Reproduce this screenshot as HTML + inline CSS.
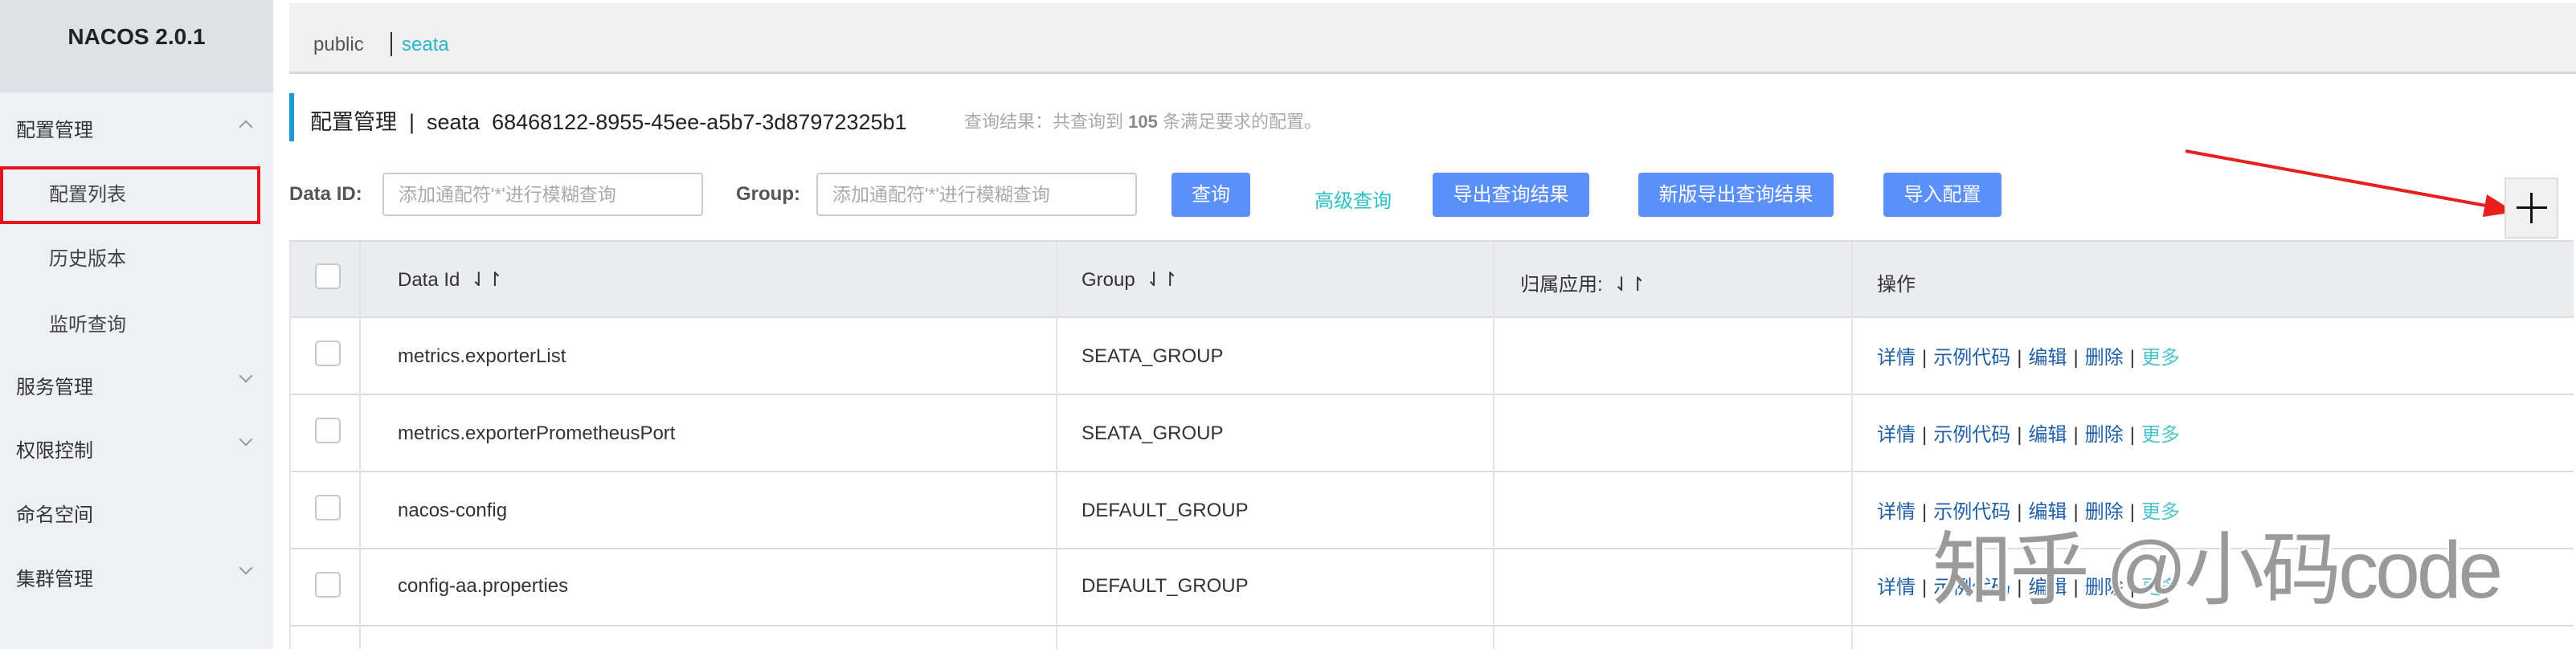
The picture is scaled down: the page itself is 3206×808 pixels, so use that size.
<!DOCTYPE html>
<html><head><meta charset="utf-8"><style>
*{margin:0;padding:0;box-sizing:border-box}
body{width:3206px;height:808px;overflow:hidden;background:#fff;font-family:"Liberation Sans","Noto Sans CJK SC",sans-serif;color:#333;position:relative;font-size:24px}
.a{position:absolute;white-space:nowrap}
.side{position:absolute;left:0;top:0;width:340px;height:808px;background:#eef0f3}
.logo{position:absolute;left:0;top:0;width:340px;height:115px;background:#dde1e8}
.mi{position:absolute;left:20px;font-size:24px;color:#333}
.si{position:absolute;left:61px;font-size:24px;color:#444}
.chev{position:absolute;left:300px;width:12px;height:12px;border-right:2px solid #999;border-bottom:2px solid #999}
.btn{position:absolute;top:215px;height:55px;background:#5b8ff9;color:#fff;border-radius:4px;font-size:24px;line-height:55px;text-align:center}
.inp{position:absolute;top:215px;height:54px;border:2px solid #ccc;border-radius:4px;color:#aaa;font-size:23px;line-height:50px;padding-left:18px}
.hl{position:absolute;left:360px;width:2843px;height:2px;background:#dcdcdc}
.vl{position:absolute;width:2px;background:#e4e4e4;top:301px;height:507px}
.cb{position:absolute;left:392px;width:32px;height:32px;border:2px solid #c8c8c8;border-radius:5px;background:#fff}
.ops{position:absolute;left:2336px;font-size:24px;color:#1f5fa8}
.ops span.s{color:#333;margin:0 8px}
.ops span.m{color:#4cc4cc}
</style></head><body>
<div class="side"><div class="logo"></div>
<div class="a" style="left:0;width:340px;text-align:center;top:30px;font-size:28px;font-weight:bold;color:#222">NACOS 2.0.1</div>
<div class="mi" style="top:142px">配置管理</div>
<div class="a" style="left:300px;width:12px;height:12px;border-left:2px solid #999;border-top:2px solid #999;transform:rotate(45deg);top:152px"></div>
<div style="position:absolute;left:0;top:196px;width:340px;height:612px;background:#eef0f3"></div>
<div style="position:absolute;left:0;top:207px;width:324px;height:72px;border:4px solid #e4161b"></div>
<div class="si" style="top:222px">配置列表</div>
<div class="si" style="top:302px">历史版本</div>
<div class="si" style="top:384px">监听查询</div>
<div class="mi" style="top:462px">服务管理</div><div class="chev" style="top:462px;transform:rotate(45deg)"></div>
<div class="mi" style="top:541px">权限控制</div><div class="chev" style="top:541px;transform:rotate(45deg)"></div>
<div class="mi" style="top:621px">命名空间</div>
<div class="mi" style="top:701px">集群管理</div><div class="chev" style="top:701px;transform:rotate(45deg)"></div>
</div>
<div style="position:absolute;left:360px;top:4px;width:2846px;height:88px;background:#f0f0f0;border-bottom:3px solid #d8d8d8"></div>
<div class="a" style="left:390px;top:42px;font-size:24px;color:#555">public</div>
<div class="a" style="left:486px;top:40px;width:2px;height:30px;background:#333"></div>
<div class="a" style="left:500px;top:42px;font-size:24px;color:#2cb5c8">seata</div>
<div class="a" style="left:360px;top:116px;width:6px;height:60px;background:#1a9bd7"></div>
<div class="a" style="left:386px;top:130px;font-size:27px;color:#222">配置管理 &nbsp;|&nbsp; seata &nbsp;68468122-8955-45ee-a5b7-3d87972325b1</div>
<div class="a" style="left:1200px;top:134px;font-size:22px;color:#aaa">查询结果：共查询到 <b style="color:#888">105</b> 条满足要求的配置。</div>
<div class="a" style="left:360px;top:228px;font-size:24px;font-weight:bold;color:#555">Data ID:</div>
<div class="inp" style="left:476px;width:399px">添加通配符'*'进行模糊查询</div>
<div class="a" style="left:916px;top:228px;font-size:24px;font-weight:bold;color:#555">Group:</div>
<div class="inp" style="left:1016px;width:399px">添加通配符'*'进行模糊查询</div>
<div class="btn" style="left:1458px;width:98px">查询</div>
<div class="a" style="left:1636px;top:230px;font-size:24px;color:#2cc0c8">高级查询</div>
<div class="btn" style="left:1783px;width:195px">导出查询结果</div>
<div class="btn" style="left:2039px;width:243px">新版导出查询结果</div>
<div class="btn" style="left:2344px;width:147px">导入配置</div>
<svg class="a" style="left:2710px;top:180px" width="430" height="95"><line x1="10" y1="8" x2="395" y2="78" stroke="#e8201c" stroke-width="4"/><polygon points="420,84 385,62 380,90" fill="#e8201c"/></svg>
<div class="a" style="left:3117px;top:221px;width:67px;height:76px;background:#f0f0f0;border:2px solid #ddd"></div>
<div class="a" style="left:3132px;top:257px;width:38px;height:3px;background:#111"></div>
<div class="a" style="left:3149px;top:240px;width:3px;height:38px;background:#111"></div>
<div class="a" style="left:360px;top:301px;width:2843px;height:94px;background:#ebecf0"></div>
<div class="hl" style="top:299px"></div>
<div class="hl" style="top:394px"></div><div class="hl" style="top:490px"></div><div class="hl" style="top:586px"></div><div class="hl" style="top:682px"></div><div class="hl" style="top:778px"></div>
<div class="vl" style="left:360px"></div><div class="vl" style="left:447px"></div><div class="vl" style="left:1314px"></div><div class="vl" style="left:1858px"></div><div class="vl" style="left:2304px"></div>
<div class="cb" style="top:328px"></div><div class="cb" style="top:424px"></div><div class="cb" style="top:520px"></div><div class="cb" style="top:616px"></div><div class="cb" style="top:712px"></div>
<div class="a" style="left:495px;top:334px">Data Id &nbsp;⇃↾</div>
<div class="a" style="left:1346px;top:334px">Group &nbsp;⇃↾</div>
<div class="a" style="left:1892px;top:334px">归属应用: &nbsp;⇃↾</div>
<div class="a" style="left:2336px;top:334px">操作</div>
<div class="a" style="left:495px;top:430px">metrics.exporterList</div>
<div class="a" style="left:1346px;top:430px">SEATA_GROUP</div>
<div class="a" style="left:495px;top:526px">metrics.exporterPrometheusPort</div>
<div class="a" style="left:1346px;top:526px">SEATA_GROUP</div>
<div class="a" style="left:495px;top:622px">nacos-config</div>
<div class="a" style="left:1346px;top:622px">DEFAULT_GROUP</div>
<div class="a" style="left:495px;top:716px">config-aa.properties</div>
<div class="a" style="left:1346px;top:716px">DEFAULT_GROUP</div>
<div class="ops a" style="top:425px">详情<span class="s">|</span>示例代码<span class="s">|</span>编辑<span class="s">|</span>删除<span class="s">|</span><span class="m">更多</span></div>
<div class="ops a" style="top:521px">详情<span class="s">|</span>示例代码<span class="s">|</span>编辑<span class="s">|</span>删除<span class="s">|</span><span class="m">更多</span></div>
<div class="ops a" style="top:617px">详情<span class="s">|</span>示例代码<span class="s">|</span>编辑<span class="s">|</span>删除<span class="s">|</span><span class="m">更多</span></div>
<div class="ops a" style="top:711px">详情<span class="s">|</span>示例代码<span class="s">|</span>编辑<span class="s">|</span>删除<span class="s">|</span><span class="m">更多</span></div>
<div class="a" style="left:2405px;top:628px;font-size:100px;letter-spacing:-4px;color:rgba(120,120,120,0.75);text-shadow:3px 3px 0 #fff,-2px -2px 0 #fff">知乎 @小码code</div>
</body></html>
